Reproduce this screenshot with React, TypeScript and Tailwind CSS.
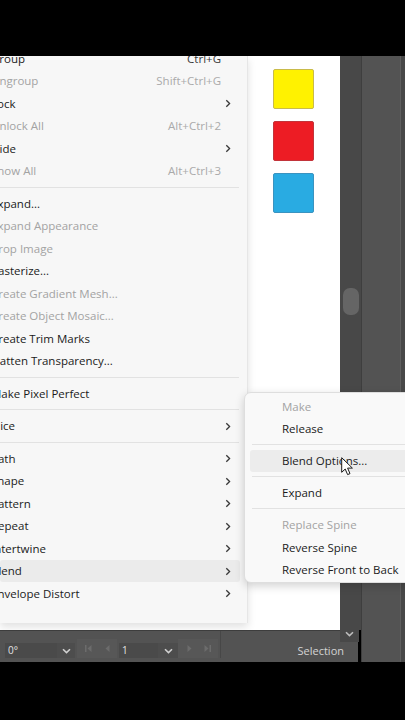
import React from 'react';

type Item =
  | { sep: true }
  | { sep?: false; label: string; shortcut?: string; sub?: boolean; off?: boolean; active?: boolean };

const mainItems: Item[] = [
  { label: 'Group', shortcut: 'Ctrl+G' },
  { label: 'Ungroup', shortcut: 'Shift+Ctrl+G', off: true },
  { label: 'Lock', sub: true },
  { label: 'Unlock All', shortcut: 'Alt+Ctrl+2', off: true },
  { label: 'Hide', sub: true },
  { label: 'Show All', shortcut: 'Alt+Ctrl+3', off: true },
  { sep: true },
  { label: 'Expand...' },
  { label: 'Expand Appearance', off: true },
  { label: 'Crop Image', off: true },
  { label: 'Rasterize...' },
  { label: 'Create Gradient Mesh...', off: true },
  { label: 'Create Object Mosaic...', off: true },
  { label: 'Create Trim Marks' },
  { label: 'Flatten Transparency...' },
  { sep: true },
  { label: 'Make Pixel Perfect' },
  { sep: true },
  { label: 'Slice', sub: true },
  { sep: true },
  { label: 'Path', sub: true },
  { label: 'Shape', sub: true },
  { label: 'Pattern', sub: true },
  { label: 'Repeat', sub: true },
  { label: 'Intertwine', sub: true },
  { label: 'Blend', sub: true, active: true },
  { label: 'Envelope Distort', sub: true },
];

const blendItems: Item[] = [
  { label: 'Make', off: true },
  { label: 'Release' },
  { sep: true },
  { label: 'Blend Options...', active: true },
  { sep: true },
  { label: 'Expand' },
  { sep: true },
  { label: 'Replace Spine', off: true },
  { label: 'Reverse Spine' },
  { label: 'Reverse Front to Back' },
];

const Chevron = () => (
  <svg width="6" height="9" viewBox="0 0 6 9" fill="none">
    <path d="M1.3 1.2L4.6 4.5L1.3 7.8" stroke="#3a3a3a" strokeWidth="1.3" />
  </svg>
);

const Down = ({ c = '#bdbdbd' }: { c?: string }) => (
  <svg width="9" height="6" viewBox="0 0 9 6" fill="none">
    <path d="M1 1.2L4.5 4.6L8 1.2" stroke={c} strokeWidth="1.6" />
  </svg>
);

const MainMenu = () => (
  <div className="absolute left-0 top-[56px] w-[248px] h-[567px] bg-[#f7f7f7] overflow-hidden border-r border-[#e6e6e6] shadow-[0_4px_8px_rgba(0,0,0,0.12)]">
    <div className="-mt-[8.75px]">
      {mainItems.map((it, i) =>
        it.sep ? (
          <div key={i} className="h-[10px] flex items-center">
            <div className="h-px w-[239px] bg-[#e2e2e2]" />
          </div>
        ) : (
          <div
            key={i}
            className={`h-[22.5px] mr-[7px] flex items-center rounded-[3px] ${it.active ? 'bg-[#ebebeb]' : ''}`}
          >
            <span className={`-ml-[9px] flex-1 whitespace-nowrap ${it.off ? 'text-[#a3a3a3]' : 'text-[#1b1b1b]'}`}>
              {it.label}
            </span>
            {it.shortcut && (
              <span className={`mr-[19px] whitespace-nowrap ${it.off ? 'text-[#aaaaaa]' : 'text-[#3a3a3a]'}`}>
                {it.shortcut}
              </span>
            )}
            {it.sub && (
              <span className="mr-[9px] flex items-center">
                <Chevron />
              </span>
            )}
          </div>
        )
      )}
    </div>
  </div>
);

const BlendMenu = () => (
  <div className="absolute left-[244px] top-[392px] w-[175px] h-[191px] bg-[#f9f9f9] rounded-l-[7px] border border-[#dedede] pt-[2px] shadow-[0_3px_10px_rgba(0,0,0,0.18)]">
    {blendItems.map((it, i) =>
      it.sep ? (
        <div key={i} className="h-[9.5px] flex items-center pl-[7px]">
          <div className="h-px flex-1 bg-[#e2e2e2]" />
        </div>
      ) : (
        <div
          key={i}
          className={`h-[22.5px] mx-[5px] pl-[32px] flex items-center rounded-[3px] whitespace-nowrap ${it.active ? 'bg-[#ececec]' : ''} ${it.off ? 'text-[#a3a3a3]' : 'text-[#1b1b1b]'}`}
        >
          {it.label}
        </div>
      )
    )}
  </div>
);

const NavIcon = ({ dir, bar }: { dir: 'l' | 'r'; bar?: boolean }) => (
  <svg width="9" height="9" viewBox="0 0 9 9">
    {dir === 'l' ? (
      <>
        {bar && <rect x="1" y="1" width="1.5" height="7" fill="#6c6c6c" />}
        <path d="M7.5 1L3.5 4.5L7.5 8Z" fill="#6c6c6c" />
      </>
    ) : (
      <>
        <path d="M1.5 1L5.5 4.5L1.5 8Z" fill="#6c6c6c" />
        {bar && <rect x="6.5" y="1" width="1.5" height="7" fill="#6c6c6c" />}
      </>
    )}
  </svg>
);

export default function App() {
  return (
    <div
      className="relative w-[405px] h-[720px] bg-black overflow-hidden text-[11.5px]"
      style={{ fontFamily: '"Open Sans", "Noto Sans", sans-serif' }}
    >
      <div className="h-[56px]" />
      <div className="flex h-[606px]">
        <div className="w-[340px] flex flex-col">
          <div className="h-[574px] bg-white flex flex-col pl-[273px] pt-[13px] gap-[12px]">
            <div className="w-[41px] h-[40px] bg-[#fff200] border border-[#c9bb4a] rounded-[2px]" />
            <div className="w-[41px] h-[40px] bg-[#ed1c24] border border-[#c2343a] rounded-[2px]" />
            <div className="w-[41px] h-[40px] bg-[#29abe2] border border-[#3a93c0] rounded-[2px]" />
          </div>
          <div className="relative z-10 flex-1 w-[358px] border-t border-[#3d3d3d] bg-[#535353] flex items-end pb-[4px] text-[10px]">
            <div className="ml-[5px] w-[52px] h-[15px] bg-[#4a4a4a] text-[#e2e2e2] pl-[3px] flex items-center">0°</div>
            <div className="w-[18px] h-[15px] bg-[#4d4d4d] flex items-center justify-center">
              <Down c="#d0d0d0" />
            </div>
            <div className="ml-[2px] w-[40px] h-[19px] bg-[#575757] flex items-center gap-[9px] pl-[7px]">
              <NavIcon dir="l" bar />
              <NavIcon dir="l" />
            </div>
            <div className="ml-[2px] w-[39px] h-[15px] bg-[#4a4a4a] text-[#e2e2e2] pl-[3px] flex items-center">1</div>
            <div className="w-[20px] h-[15px] bg-[#4d4d4d] flex items-center justify-center">
              <Down c="#d0d0d0" />
            </div>
            <div className="w-[40px] h-[19px] bg-[#575757] flex items-center gap-[8px] pl-[8px]">
              <NavIcon dir="r" />
              <NavIcon dir="r" bar />
            </div>
            <div className="ml-[2px] w-px h-[27px] bg-[#474747]" />
            <span className="ml-auto mr-[14px] mb-[-1px] text-[11px] text-[#d4d4d4]">Selection</span>
          </div>
        </div>
        <div className="w-[21px] flex flex-col">
          <div className="h-[574px] bg-[#484848] pt-[232px] pl-[3px]">
            <div className="w-[16px] h-[27px] bg-[#656565] rounded-[7px]" />
          </div>
          <div className="flex-1" />
        </div>
        <div className="w-px bg-[#3e3e3e]" />
        <div className="flex-1 bg-[#535353]" />
        <div className="w-px bg-[#5f5f5f]" />
        <div className="w-[4px] bg-[#484848]" />
      </div>

      <div className="absolute z-20 left-[340px] top-[626px] w-[19px] h-[16px] bg-[#484848] flex items-center justify-center">
        <Down />
      </div>

      <MainMenu />
      <BlendMenu />

      <svg className="absolute z-30 left-[341px] top-[457px]" width="13" height="19" viewBox="0 0 13 19">
        <path
          d="M0.7 0.7V15.3L4.2 12L6.6 17.6L9 16.6L6.6 11.1H11.4Z"
          fill="#ffffff"
          stroke="#1a1a1a"
          strokeWidth="1"
          strokeLinejoin="round"
        />
      </svg>
    </div>
  );
}
